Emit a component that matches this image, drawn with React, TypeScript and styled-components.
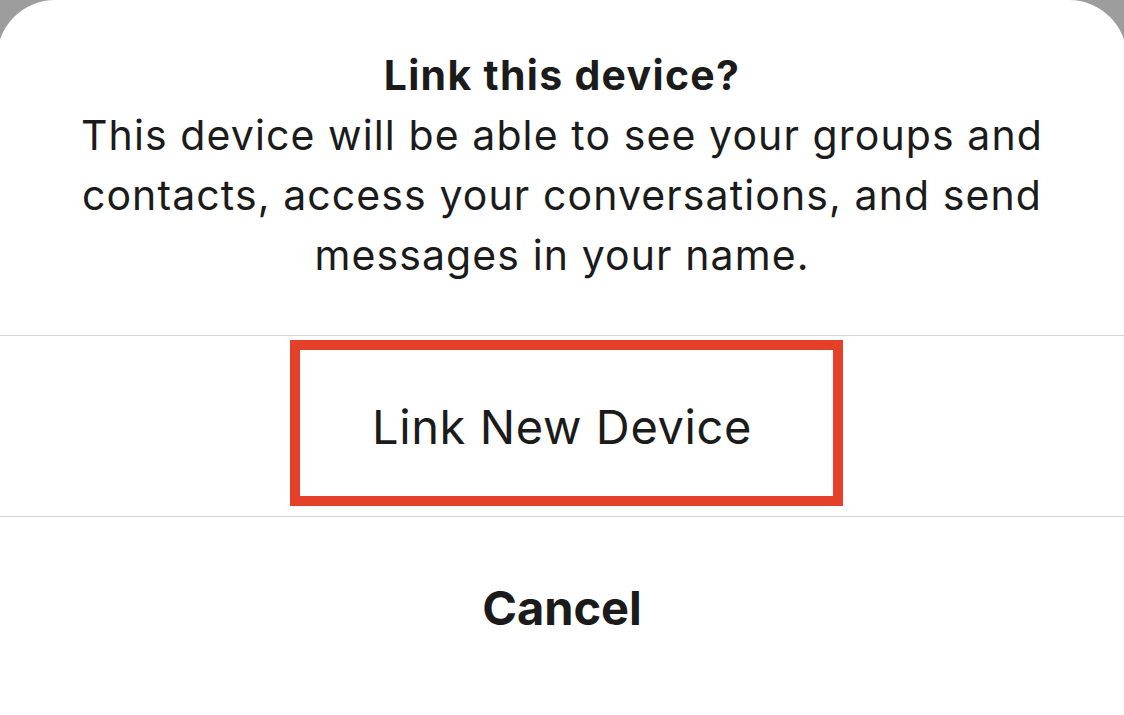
import React, { FC } from 'react'
import styled, { createGlobalStyle } from 'styled-components'

const GlobalStyle = createGlobalStyle`
  html, body {
    margin: 0;
    padding: 0;
    height: 100%;
    overflow: hidden;
    background: #9d9d9d;
  }
  #root {
    height: 100%;
  }
`;

interface ActionProps {
  label: string;
  bold?: boolean;
  highlighted?: boolean;
}

const SheetAction: FC<ActionProps> = ({ label, bold = false, highlighted = false }) => (
  <ActionRow>
    <ActionLabel bold={bold}>{label}</ActionLabel>
    {highlighted && <Highlight />}
  </ActionRow>
);

const App: FC = () => {
  return (
    <>
      <GlobalStyle />
      <Sheet>
        <Header>
          <Title>Link this device?</Title>
          <Message>
            This device will be able to see your groups and contacts, access your conversations, and send
            messages in your name.
          </Message>
        </Header>
        <SheetAction label="Link New Device" highlighted />
        <SheetAction label="Cancel" bold />
      </Sheet>
    </>
  );
};

export default App;

const Sheet = styled.div`
  box-sizing: border-box;
  width: calc(100% + 6px);
  margin-left: -3px;
  height: 100%;
  background: #ffffff;
  border-radius: 58px 58px 0 0;
  display: flex;
  flex-direction: column;
  font-family: Inter, "Noto Sans", "Liberation Sans", sans-serif;
  color: #1b1b1b;
`;

const Header = styled.div`
  display: flex;
  flex-direction: column;
  align-items: center;
  padding: 53px 30px 50px;
  border-bottom: 1px solid #d5d5d5;
  text-align: center;
`;

const Title = styled.div`
  font-size: 41px;
  line-height: 44px;
  font-weight: 700;
  letter-spacing: 1.3px;
  margin-bottom: 8px;
`;

const Message = styled.div`
  font-size: 41px;
  line-height: 60px;
  font-weight: 400;
  letter-spacing: 1.1px;
  max-width: 1010px;
`;

const ActionRow = styled.div`
  position: relative;
  height: 180px;
  display: flex;
  align-items: center;
  justify-content: center;
  border-bottom: 1px solid #d5d5d5;

  &:last-child {
    border-bottom: none;
  }
`;

const ActionLabel = styled.div<{ bold: boolean }>`
  font-size: 47px;
  font-weight: ${({ bold }) => (bold ? 700 : 400)};
  letter-spacing: ${({ bold }) => (bold ? '0' : '0.6px')};
`;

const Highlight = styled.div`
  position: absolute;
  left: 293px;
  top: 4px;
  width: 553px;
  height: 166px;
  box-sizing: border-box;
  border: 10px solid #e5402a;
`;
